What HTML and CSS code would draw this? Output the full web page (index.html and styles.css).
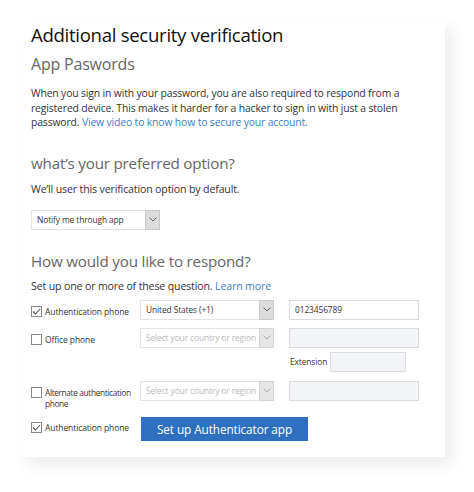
FILE: index.html
```html
<!DOCTYPE html>
<html>
<head>
<meta charset="utf-8">
<link rel="stylesheet" href="styles.css">
</head>
<body>
<div class="card">
  <h1 class="title">Additional security verification</h1>
  <h2 class="subtitle">App Paswords</h2>
  <p class="intro">When you sign in with your password, you are also required to respond from a registered device. This makes it harder for a hacker to sign in with just a stolen password. <a class="link" href="#">View video to know how to secure your account.</a></p>

  <h3 class="section section-first">what’s your preferred option?</h3>
  <p class="note">We’ll user this verification option by default.</p>
  <div class="select select-pref">
    <span class="select-text">Notify me through app</span>
    <span class="select-arrow"><svg width="8" height="5" viewBox="0 0 8 5"><polyline points="0.5,0.5 4,4 7.5,0.5" fill="none" stroke="#666" stroke-width="1"/></svg></span>
  </div>

  <h3 class="section section-second">How would you like to respond?</h3>
  <p class="note note-setup">Set up one or more of these question. <a class="link" href="#">Learn more</a></p>

  <div class="grid">
    <label class="check"><span class="box checked"><svg width="9" height="7" viewBox="0 0 9 7"><polyline points="1,3.5 3.5,6 8,1" fill="none" stroke="#555" stroke-width="1.1"/></svg></span><span class="check-label">Authentication phone</span></label>
    <div class="select">
      <span class="select-text">United States (+1)</span>
      <span class="select-arrow"><svg width="8" height="5" viewBox="0 0 8 5"><polyline points="0.5,0.5 4,4 7.5,0.5" fill="none" stroke="#666" stroke-width="1"/></svg></span>
    </div>
    <div class="input">0123456789</div>

    <label class="check"><span class="box"></span><span class="check-label">Office phone</span></label>
    <div class="select disabled">
      <span class="select-text">Select your country or region</span>
      <span class="select-arrow"><svg width="8" height="5" viewBox="0 0 8 5"><polyline points="0.5,0.5 4,4 7.5,0.5" fill="none" stroke="#aaa" stroke-width="1"/></svg></span>
    </div>
    <div class="input disabled"></div>

    <div class="ext">
      <span class="ext-label">Extension</span>
      <div class="input disabled ext-input"></div>
    </div>

    <label class="check check-alt"><span class="box"></span><span class="check-label">Alternate authentication<br>phone</span></label>
    <div class="select disabled">
      <span class="select-text">Select your country or region</span>
      <span class="select-arrow"><svg width="8" height="5" viewBox="0 0 8 5"><polyline points="0.5,0.5 4,4 7.5,0.5" fill="none" stroke="#aaa" stroke-width="1"/></svg></span>
    </div>
    <div class="input disabled"></div>

    <label class="check check-last"><span class="box checked"><svg width="9" height="7" viewBox="0 0 9 7"><polyline points="1,3.5 3.5,6 8,1" fill="none" stroke="#555" stroke-width="1.1"/></svg></span><span class="check-label">Authentication phone</span></label>
    <button class="btn">Set up Authenticator app</button>
  </div>
</div>
</body>
</html>
```

FILE: styles.css
```css
* { box-sizing: border-box; }
html, body { margin: 0; padding: 0; background: #fff; }
body {
  font-family: "Open Sans", "Noto Sans", sans-serif;
  color: #333;
  width: 474px;
  height: 492px;
  overflow: hidden;
}
.card {
  margin: 20px 0 0 18px;
  width: 427px;
  height: 437px;
  padding: 3px 0 0 13px;
  background: #fff;
  box-shadow: 8px 8px 14px rgba(0,0,0,0.07);
}
.title {
  margin: 0;
  font-size: 18.6px;
  font-weight: 400;
  line-height: 24px;
  color: #111;
  letter-spacing: -0.3px;
}
.subtitle {
  margin: 5px 0 0;
  font-size: 16px;
  font-weight: 400;
  line-height: 24px;
  color: #666;
  letter-spacing: -0.2px;
}
.intro {
  margin: 10px 0 0;
  width: 385px;
  font-size: 10.4px;
  line-height: 14.5px;
  color: #333;
  letter-spacing: -0.15px;
}
.link { color: #3b7fc9; text-decoration: none; }
.section {
  margin: 21px 0 0;
  font-size: 15.2px;
  font-weight: 400;
  line-height: 24px;
  color: #666;
  letter-spacing: -0.2px;
}
.section-second { margin-top: 19px; }
.note {
  margin: 7.5px 0 0;
  font-size: 10.6px;
  line-height: 15px;
  color: #333;
  letter-spacing: -0.15px;
}
.note-setup { margin-top: 6.5px; }
.select {
  display: flex;
  height: 20px;
  border: 1px solid #e3e3e3;
  background: #fff;
}
.select-pref {
  margin-top: 12.5px;
  width: 129px;
}
.select-text {
  flex: 1;
  font-size: 8.4px;
  line-height: 18px;
  padding-left: 5px;
  color: #333;
  white-space: nowrap;
  overflow: hidden;
  letter-spacing: -0.1px;
}
.select-arrow {
  width: 15px;
  flex: none;
  display: flex;
  align-items: center;
  justify-content: center;
  background: #dcdcdc;
  margin: -1px -1px -1px 0;
  border: 1px solid #c8c8c8;
}
.select.disabled .select-text { color: #b8b8b8; }
.select.disabled .select-arrow { background: #e6e6e6; border-color: #d4d4d4; }
.grid {
  margin-top: 5.5px;
  display: grid;
  grid-template-columns: 94px 134px 130px;
  column-gap: 15px;
  align-items: start;
}
.grid > :nth-child(n+4) { margin-top: 8px; }
.check {
  display: flex;
  align-items: flex-start;
  gap: 3px;
  padding-top: 6px;
}
.box {
  width: 11px;
  height: 11px;
  flex: none;
  border: 1px solid #8a8a8a;
  background: #fff;
  display: flex;
  align-items: center;
  justify-content: center;
}
.check-label {
  font-size: 8.5px;
  line-height: 11.5px;
  color: #333;
  white-space: nowrap;
  letter-spacing: -0.1px;
}
.input {
  height: 20px;
  border: 1px solid #d9dbde;
  background: #fff;
  font-size: 8.4px;
  line-height: 18px;
  padding-left: 5px;
  color: #333;
  letter-spacing: -0.1px;
}
.input.disabled { background: #f2f4f8; }
.grid > .ext {
  grid-column: 3;
  margin-top: 4px;
  display: flex;
  align-items: center;
  gap: 4px;
  padding-left: 1px;
}
.ext-label { font-size: 8.4px; color: #333; width: 36px; white-space: nowrap; letter-spacing: -0.1px; }
.ext-input { width: 76px; }
.grid > .check-alt { margin-top: 9px; height: 20px; }
.grid > .check-alt + .select, .grid > .check-alt + .select + .input { margin-top: 9px; }
.check-alt .check-label { flex: none; font-size: 8.3px; letter-spacing: -0.35px; }
.grid > .check-last { margin-top: 16px; padding-top: 5px; }
.grid > .btn {
  margin-top: 16px;
  margin-left: 1px;
  grid-column: 2 / 4;
  width: 167px;
  height: 24px;
  border: 0;
  padding: 0;
  background: #2f6fbf;
  color: #fff;
  font-family: "Open Sans", "Noto Sans", sans-serif;
  font-size: 11.8px;
  letter-spacing: -0.1px;
  cursor: pointer;
}
```
